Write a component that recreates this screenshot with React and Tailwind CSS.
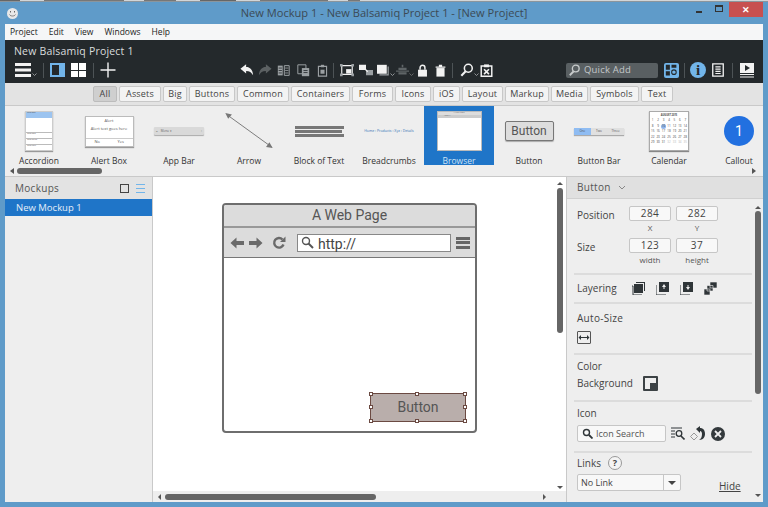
import React from "react";

const filters = [
  ["All", "w-[24px]"], ["Assets", "w-[42px]"], ["Big", "w-[24px]"], ["Buttons", "w-[46px]"], ["Common", "w-[52px]"],
  ["Containers", "w-[59px]"], ["Forms", "w-[41px]"], ["Icons", "w-[36px]"], ["iOS", "w-[27px]"], ["Layout", "w-[41px]"],
  ["Markup", "w-[44px]"], ["Media", "w-[37px]"], ["Symbols", "w-[49px]"], ["Text", "w-[32px]"],
];

function Glyph({ size = 16, children, className = "" }) {
  return (
    <svg width={size} height={size} viewBox="0 0 16 16" className={`shrink-0 ${className}`}>
      {children}
    </svg>
  );
}

function Divider() {
  return <div className="w-px h-[15px] bg-[#4d5356] shrink-0" />;
}

function Caret({ color = "#a8acae" }) {
  return (
    <svg width="5" height="14" viewBox="0 0 5 14" className="shrink-0">
      <path d="M0.500 10.500l2 2 2-2" fill="none" stroke={color} strokeWidth="0.800" />
    </svg>
  );
}

function Toolbar() {
  const w = "#f2f2f2";
  const g = "#9ba0a3";
  return (
    <div className="h-[26px] flex items-center pl-[10px]">
      <Glyph size={16}><path d="M0 1h16v3H0zM0 6.500h16v3H0zM0 12h16v3H0z" fill={w} /></Glyph>
      <div className="ml-[1px] mr-[6px]"><Caret /></div>
      <Divider />
      <div className="ml-[6px] w-[15px] h-[14px] bg-[#72b5ea] flex p-[2px] pr-[3px] shrink-0"><div className="w-[7px] bg-[#24292c]" /></div>
      <div className="ml-[6px] w-[15px] h-[14px] grid grid-cols-2 gap-[1px] shrink-0">
        <div className="bg-white" /><div className="bg-white" /><div className="bg-white" /><div className="bg-white" />
      </div>
      <div className="w-[7px] shrink-0" />
      <Divider />
      <Glyph size={16} className="ml-[6px]"><path d="M0.500 8h15M8 0.500v15" stroke={w} strokeWidth="1.400" /></Glyph>
      <Glyph size={14} className="ml-[124px]"><path d="M0.500 6.500L7 1.500V4.500c4.500 0 7.500 3 8 9.500C13 10.500 11 9 7 9v3z" fill={w} /></Glyph>
      <Glyph size={14} className="ml-[4px]"><path d="M15.500 6.500L9 1.500V4.500C4.500 4.500 1.500 7.500 1 14 3 10.500 5 9 9 9v3z" fill="#5c6163" /></Glyph>
      <Glyph size={13} className="ml-[5px]"><path d="M1 2h6v12H1z" fill={g} /><path d="M9 2h6v12H9z" fill="none" stroke={g} strokeWidth="1.200" /><path d="M10 5h4M10 8h4M10 11h4" stroke={g} /><path d="M2 5h4M2 8h4M2 11h4" stroke="#24292c" /></Glyph>
      <Glyph size={13} className="ml-[7px]"><path d="M1 1h10v11H1z" fill="none" stroke={g} strokeWidth="1.200" /><path d="M6 5h9v10H6z" fill={g} /><path d="M8 8h5M8 10.500h5" stroke="#24292c" /></Glyph>
      <Glyph size={13} className="ml-[6px]"><path d="M3 3h10v12H3z" fill="none" stroke={g} strokeWidth="1.400" /><path d="M6 1h4v3H6z" fill={g} /><path d="M5.500 7h5v5h-5z" fill={g} /></Glyph>
      <div className="ml-[4px]"><Divider /></div>
      <Glyph size={14} className="ml-[6px]"><path d="M2 3h12v10H2z" fill="none" stroke={w} strokeWidth="1.300" /><path d="M7 7h6v5H7z" fill={w} /><path d="M0 1h3v3H0zM13 1h3v3h-3zM0 12h3v3H0zM13 12h3v3h-3z" fill={g} /></Glyph>
      <Glyph size={14} className="ml-[5px]"><path d="M0 2h8v6H0z" fill={w} /><path d="M8 8h8v6H8z" fill={g} /><path d="M6 6l4 4" stroke={w} strokeWidth="1.500" /></Glyph>
      <Glyph size={13} className="ml-[4px]"><path d="M0 1h12v11H0z" fill={w} /><path d="M13 3h1.500v11H3v-1.500h10z" fill={g} /></Glyph>
      <Caret />
      <Glyph size={13} className="ml-[1px]"><path d="M7 1h2v3H7zM3 4.500h10v3H3zM0 8h16v1.500H0zM3 10h10v3H3z" fill="#5f6567" /></Glyph>
      <Caret color="#777" />
      <Glyph size={13} className="ml-[2px]"><path d="M2.500 7h11v8.500h-11z" fill={w} /><path d="M5 7V4.500a3 3 0 0 1 6 0V7" fill="none" stroke={w} strokeWidth="1.800" /></Glyph>
      <Glyph size={13} className="ml-[5px]"><path d="M3 5h10v10.500H3z" fill={w} /><path d="M2 3h12v1.500H2zM6 1h4v2H6z" fill={w} /></Glyph>
      <div className="ml-[5px]"><Divider /></div>
      <Glyph size={14} className="ml-[7px]"><circle cx="9.500" cy="6" r="4.500" fill="none" stroke={w} strokeWidth="1.800" /><path d="M6.500 9.500L1.500 14.500" stroke={w} strokeWidth="2.400" /></Glyph>
      <Caret />
      <Glyph size={13} className="ml-[1px]"><path d="M1.500 2.500h13v12.500h-13z" fill="none" stroke={w} strokeWidth="1.800" /><path d="M5 0.500h6V4H5z" fill={w} /><path d="M5 6.500l6 6M11 6.500l-6 6" stroke={w} strokeWidth="2" /></Glyph>
      <div className="ml-[73px] w-[92px] h-[15px] shrink-0 bg-[#595f62] rounded-[2px] flex items-center pl-[3px] text-[9.500px] text-[#c4c7c9] tracking-[0.2px]">
        <Glyph size={12}><circle cx="9" cy="6" r="4.500" fill="none" stroke="#c8cbcc" strokeWidth="1.800" /><path d="M6 10l-5 5" stroke="#c8cbcc" strokeWidth="2.400" /></Glyph>
        <span className="ml-[3px] leading-none">Quick Add</span>
      </div>
      <div className="ml-[6px] w-[15px] h-[15px] shrink-0 bg-[#72b5ea] rounded-[2px] flex items-center justify-center">
        <Glyph size={13}><path d="M1 1h5v6H1zM8 1h6v3.500H8zM1 9h5v5H1z" fill="#24292c" /><circle cx="11" cy="10" r="2.800" fill="none" stroke="#24292c" strokeWidth="1.300" /></Glyph>
      </div>
      <div className="ml-[5px]"><Divider /></div>
      <div className="ml-[5px] w-[16px] h-[16px] shrink-0 rounded-full bg-[#72b5ea] flex items-center justify-center font-['Liberation_Serif',serif] font-bold text-[15px] leading-none text-[#24292c]">i</div>
      <Glyph size={14} className="ml-[5px]"><path d="M2 1h12v14H2z" fill="none" stroke={w} strokeWidth="1.500" /><path d="M5 4.500h6M5 7h6M5 9.500h6M5 12h6" stroke={w} strokeWidth="1.300" /></Glyph>
      <div className="ml-[7px]"><Divider /></div>
      <Glyph size={16} className="ml-[6px]"><path d="M1 1h14v10H1z" fill={w} /><path d="M6 3l5 3-5 3z" fill="#24292c" /><path d="M1 12.500h14M1 15h14" stroke={w} strokeWidth="1.200" /></Glyph>
    </div>
  );
}

function FilterBar() {
  return (
    <div className="h-[23px] bg-[#e3e3e3] border-b border-[#c9c9c9] flex items-center pl-[88px] gap-[2px] text-[9px] text-[#444]">
      {filters.map(([name, width], i) => (
        <div
          key={name}
          className={`h-[16px] shrink-0 flex items-center justify-center border rounded-[2px] tracking-[0.2px] ${width} ${i === 0 ? "bg-[#cfcfcf] border-[#bcbcbc]" : "bg-[#f3f3f3] border-[#c8c8c8]"}`}
        >
          {name}
        </div>
      ))}
    </div>
  );
}

function AccordionThumb() {
  return (
    <div className="w-[28px] h-[40px] bg-white border border-[#ccc] shadow-[0_1px_1px_#999] flex flex-col text-[2px] leading-none text-[#555]">
      <div className="h-[6px] bg-[#9cc4f0] px-[1px]">Item One</div>
      <div className="flex-1" />
      <div className="h-[6px] border-t border-[#bbb] px-[1px]">Item Two</div>
      <div className="h-[6px] border-t border-[#bbb] px-[1px]">Item Three</div>
      <div className="h-[6px] border-t border-[#bbb] px-[1px]">Item Four</div>
    </div>
  );
}

function AlertThumb() {
  return (
    <div className="w-[49px] h-[31px] bg-white border border-[#bbb] shadow-[0_1px_1px_#999] flex flex-col items-center text-[4px] leading-none text-[#555]">
      <div className="mt-[2px]">Alert</div>
      <div className="mt-[4px] flex-1">Alert text goes here</div>
      <div className="w-full h-[8px] border-t border-[#ccc] grid grid-cols-2 text-center items-center">
        <span>No</span><span>Yes</span>
      </div>
    </div>
  );
}

function AppBarThumb() {
  return (
    <div className="w-[50px] h-[8px] bg-[#d9d9d9] rounded-[1px] shadow-[0_1px_1px_#aaa] flex items-center px-[2px] text-[3px] text-[#666]">
      <span>≡</span><span className="ml-[3px]">Menu ▾</span><span className="ml-auto">›</span>
    </div>
  );
}

function ArrowThumb() {
  return (
    <svg width="52" height="36" viewBox="0 0 52 38">
      <path d="M3 2L50 36" stroke="#777" strokeWidth="1" />
      <path d="M1 0l7 1.500-4 4.500zM51 37l-7-1 3.500-5z" fill="#777" />
    </svg>
  );
}

function TextBlockThumb() {
  return (
    <div className="w-[49px] flex flex-col gap-[1px]">
      <div className="h-[3px] bg-[#777]" />
      <div className="h-[3px] bg-[#777] w-[47px]" />
      <div className="h-[3px] bg-[#777]" />
    </div>
  );
}

function BreadThumb() {
  return <div className="text-[3.500px] leading-none text-[#2f6fb5] whitespace-nowrap">Home › Products › Xyz › Details</div>;
}

function BrowserThumb() {
  return (
    <div className="w-[45px] h-[40px] bg-white border border-[#bbb] flex flex-col">
      <div className="h-[3px] bg-[#ddd] text-[2px] leading-none text-center text-[#666]">A Web Page</div>
      <div className="h-[3px] bg-[#ccc] text-[2px] leading-none text-[#666] pl-[2px]">← → http://</div>
    </div>
  );
}

function ButtonThumb() {
  return (
    <div className="w-[49px] h-[20px] bg-[#ddd] border border-[#777] rounded-[2px] shadow-[0_1px_1px_#aaa] flex items-center justify-center font-['Roboto',sans-serif] text-[12px] text-[#555]">
      Button
    </div>
  );
}

function ButtonBarThumb() {
  return (
    <div className="w-[50px] h-[7px] grid grid-cols-3 shadow-[0_1px_1px_#aaa] text-[3px] leading-[7px] text-center text-[#555]">
      <span className="bg-[#8fbcf2]">One</span><span className="bg-[#e0e0e0]">Two</span><span className="bg-[#e0e0e0]">Three</span>
    </div>
  );
}

function CalendarThumb() {
  const days = Array.from({ length: 35 }, (_, i) => i + 1);
  return (
    <div className="w-[40px] h-[40px] bg-white border border-[#aaa] shadow-[0_1px_1px_#888] flex flex-col items-center text-[#444] overflow-hidden">
      <div className="text-[2.500px] leading-[6px] font-bold">AUGUST 2015</div>
      <div className="w-full h-[28px] grid grid-cols-7 text-[3px] leading-[5px] text-center">
        {days.map((d) => (
          <span key={d} className={d === 10 ? "bg-[#8fb4ea] rounded-full" : d > 31 ? "text-[#bbb]" : ""}>{d}</span>
        ))}
      </div>
    </div>
  );
}

function CalloutThumb() {
  return (
    <div className="w-[30px] h-[30px] rounded-full bg-[#2270e0] text-white flex items-center justify-center font-['Roboto',sans-serif] text-[14px]">1</div>
  );
}

const library = [
  ["Accordion", <AccordionThumb key="a" />],
  ["Alert Box", <AlertThumb key="b" />],
  ["App Bar", <AppBarThumb key="c" />],
  ["Arrow", <ArrowThumb key="d" />],
  ["Block of Text", <TextBlockThumb key="e" />],
  ["Breadcrumbs", <BreadThumb key="f" />],
  ["Browser", <BrowserThumb key="g" />],
  ["Button", <ButtonThumb key="h" />],
  ["Button Bar", <ButtonBarThumb key="i" />],
  ["Calendar", <CalendarThumb key="j" />],
  ["Callout", <CalloutThumb key="k" />],
];

function Library() {
  return (
    <div className="h-[71px] bg-[#eeeeee] border-b border-[#c9c9c9] flex flex-col relative overflow-hidden">
      <div className="flex h-[59px] ml-[-1px]">
        {library.map(([name, thumb]) => {
          const on = name === "Browser";
          return (
            <div key={name} className={`w-[70px] shrink-0 flex flex-col items-center ${on ? "bg-[#1f75c8] text-[#cfe3f5]" : "text-[#333]"}`}>
              <div className="h-[50px] w-full shrink-0 flex items-center justify-center overflow-hidden">{thumb}</div>
              <div className="text-[8.500px] leading-[13px] whitespace-nowrap mt-[-2px]">{name}</div>
            </div>
          );
        })}
      </div>
      <div className="h-[11px] flex items-center pl-[5px]">
        <span className="w-0 h-0 border-y-[3px] border-y-transparent border-r-[4px] border-r-[#555]" />
        <div className="ml-[3px] w-[85px] h-[6px] rounded-full bg-[#666]" />
        <span className="ml-auto mr-[7px] w-0 h-0 border-y-[3px] border-y-transparent border-l-[4px] border-l-[#555]" />
      </div>
    </div>
  );
}

function MockupsPanel() {
  return (
    <div className="w-[148px] shrink-0 bg-[#eeeeee] border-r border-[#c9c9c9] flex flex-col">
      <div className="h-[22px] bg-[#e3e3e3] flex items-center pl-[10px] text-[10px] text-[#555] tracking-[0.3px]">
        <span>Mockups</span>
        <div className="ml-[61px] w-[9px] h-[9px] border border-[#444]" />
        <div className="ml-[7px] w-[9px] h-[9px] flex flex-col justify-between">
          <div className="h-px bg-[#72b5ea]" /><div className="h-px bg-[#72b5ea]" /><div className="h-px bg-[#72b5ea]" />
        </div>
      </div>
      <div className="h-[17px] bg-[#1f75c8] text-[#e4eef8] text-[9.500px] leading-[17px] pl-[11px]">New Mockup 1</div>
    </div>
  );
}

function BrowserMock() {
  return (
    <div className="absolute left-[69px] top-[26px] w-[255px] h-[230px] bg-white border-2 border-[#6e6e6e] rounded-[4px] flex flex-col overflow-hidden">
      <div className="h-[23px] bg-[#dcdcdc] border-b-2 border-[#999] flex items-center justify-center font-['Roboto',sans-serif] text-[14px] text-[#555]">A Web Page</div>
      <div className="h-[30px] bg-[#dcdcdc] border-b border-[#777] flex items-center pl-[6px]">
        <svg width="14" height="12" viewBox="0 0 14 12" className="shrink-0"><path d="M0.500 6l6-5.500V4H14v4H6.500v3.500z" fill="#6a6a6a" /></svg>
        <svg width="14" height="12" viewBox="0 0 14 12" className="ml-[5px] shrink-0"><path d="M13.500 6l-6-5.500V4H0v4h7.500v3.500z" fill="#6a6a6a" /></svg>
        <svg width="14" height="14" viewBox="0 0 14 14" className="ml-[9px] shrink-0"><path d="M11.500 8.500A4.800 4.800 0 1 1 10.500 3.500" fill="none" stroke="#6a6a6a" strokeWidth="2.400" /><path d="M8 6h5.500V0.500z" fill="#6a6a6a" /></svg>
        <div className="ml-[11px] w-[154px] h-[18px] shrink-0 bg-white border border-[#888] flex items-center pl-[3px]">
          <svg width="13" height="13" viewBox="0 0 13 13"><circle cx="5" cy="5" r="3.500" fill="none" stroke="#555" strokeWidth="1.400" /><path d="M7.500 7.500L12 12" stroke="#555" strokeWidth="2" /></svg>
          <span className="ml-[4px] font-['Roboto',sans-serif] text-[14px] leading-none text-[#444] mt-[3px]">http://</span>
        </div>
        <div className="ml-[5px] w-[14px] h-[12px] shrink-0 flex flex-col justify-between">
          <div className="h-[3px] bg-[#666]" /><div className="h-[3px] bg-[#666]" /><div className="h-[3px] bg-[#666]" />
        </div>
      </div>
    </div>
  );
}

function Handle({ className }) {
  return <div className={`absolute w-[4px] h-[4px] bg-white border border-[#6b4a42] ${className}`} />;
}

function SelectedButton() {
  return (
    <div className="absolute left-[217px] top-[216px] w-[96px] h-[29px] bg-[#b9aeab] border border-[#6b4a42] flex items-center justify-center font-['Roboto',sans-serif] text-[14px] text-[#555]">
      Button
      <Handle className="-left-[2px] -top-[2px]" />
      <Handle className="left-[44px] -top-[2px]" />
      <Handle className="-right-[2px] -top-[2px]" />
      <Handle className="-left-[2px] top-[11px]" />
      <Handle className="-right-[2px] top-[11px]" />
      <Handle className="-left-[2px] -bottom-[2px]" />
      <Handle className="left-[44px] -bottom-[2px]" />
      <Handle className="-right-[2px] -bottom-[2px]" />
    </div>
  );
}

function Canvas() {
  return (
    <div className="flex-1 flex flex-col min-w-0">
      <div className="flex-1 flex min-h-0">
        <div className="flex-1 bg-white relative overflow-hidden">
          <BrowserMock />
          <SelectedButton />
        </div>
        <div className="w-[13px] bg-white flex flex-col items-center pt-[5px]">
          <span className="w-0 h-0 border-x-[3px] border-x-transparent border-b-[3px] border-b-[#555]" />
          <div className="mt-[3px] w-[6px] h-[145px] rounded-full bg-[#666]" />
          <span className="mt-auto mb-[2px] w-0 h-0 border-x-[3px] border-x-transparent border-t-[3px] border-t-[#555]" />
        </div>
      </div>
      <div className="h-[11px] bg-[#eeeeee] flex items-center pl-[5px]">
        <span className="w-0 h-0 border-y-[3px] border-y-transparent border-r-[3px] border-r-[#555]" />
        <div className="ml-[4px] w-[211px] h-[6px] rounded-full bg-[#666]" />
        <span className="ml-auto mr-[20px] w-0 h-0 border-y-[3px] border-y-transparent border-l-[3px] border-l-[#555]" />
      </div>
    </div>
  );
}

function NumberField({ value, label }) {
  return (
    <div className="flex flex-col items-center w-[42px]">
      <div className="w-full h-[15px] bg-[#f8f8f8] border border-[#c6c6c6] rounded-[2px] text-[10px] leading-[13px] text-center text-[#444] tracking-[0.5px]">{value}</div>
      <div className="text-[8px] leading-[14px] text-[#555]">{label}</div>
    </div>
  );
}

function Sep() {
  return <div className="h-[2px] shrink-0 bg-[#dcdcdc]" />;
}

function Inspector() {
  const d = "#2f3538";
  return (
    <div className="w-[197px] shrink-0 bg-[#eeeeee] border-l border-[#c9c9c9] flex flex-col text-[10px] text-[#444]">
      <div className="h-[22px] bg-[#e0e0e0] border-b border-[#d0d0d0] flex items-center pl-[10px] text-[10px] text-[#555] tracking-[0.3px]">
        Button<svg width="8" height="5" viewBox="0 0 8 5" className="ml-[7px]"><path d="M1 1l3 3 3-3" fill="none" stroke="#888" /></svg>
      </div>
      <div className="flex-1 flex min-h-0">
        <div className="flex-1 pl-[7px] flex flex-col min-w-0">
          <div className="pt-[7px] px-[3px] h-[74px] shrink-0">
            <div className="flex h-[32px]">
              <span className="w-[52px] leading-[19px]">Position</span>
              <div className="flex gap-[5px]"><NumberField value="284" label="X" /><NumberField value="282" label="Y" /></div>
            </div>
            <div className="flex">
              <span className="w-[52px] leading-[19px]">Size</span>
              <div className="flex gap-[5px]"><NumberField value="123" label="width" /><NumberField value="37" label="height" /></div>
            </div>
          </div>
          <Sep />
          <div className="h-[27px] shrink-0 flex items-center pl-[3px]">
            <span className="w-[55px]">Layering</span>
            <svg width="13" height="13" viewBox="0 0 13 13"><path d="M4 0h9v9h-1V1H4z" fill={d} /><path d="M2 2h9v9H2z" fill={d} /><path d="M0 4h1v9h9" fill="none" stroke={d} /></svg>
            <svg width="13" height="13" viewBox="0 0 13 13" className="ml-[11px]"><path d="M3 0h10v10H3z" fill={d} /><path d="M0 3v10h10" fill="none" stroke={d} /><path d="M8 2l2 3H6z" fill="#eee" /><path d="M7.500 4h1v3h-1z" fill="#eee" /></svg>
            <svg width="13" height="13" viewBox="0 0 13 13" className="ml-[11px]"><path d="M3 0h10v10H3z" fill={d} /><path d="M0 3v10h10" fill="none" stroke={d} /><path d="M8 8l2-3H6z" fill="#eee" /><path d="M7.500 3h1v3h-1z" fill="#eee" /></svg>
            <svg width="13" height="13" viewBox="0 0 13 13" className="ml-[11px]"><path d="M6 0h7v6H6zM3 3.500h6V9H3zM0 7h6v6H0z" fill={d} stroke="#eee" strokeWidth="0.600" /></svg>
          </div>
          <Sep />
          <div className="h-[49px] shrink-0 pl-[3px] pt-[6px]">
            <div className="leading-[16px] tracking-[0.3px]">Auto-Size</div>
            <div className="mt-[5px] w-[14px] h-[13px] border border-[#555] rounded-[1px] flex items-center justify-center">
              <svg width="12" height="7" viewBox="0 0 12 7"><path d="M1 3.500h10" stroke={d} /><path d="M0.500 3.500L3 1v5zM11.500 3.500L9 1v5z" fill={d} /></svg>
            </div>
          </div>
          <Sep />
          <div className="h-[45px] shrink-0 pl-[3px] pt-[3px]">
            <div className="leading-[16px]">Color</div>
            <div className="flex items-center mt-[2px]">
              <span className="w-[66px]">Background</span>
              <div className="relative w-[15px] h-[15px] border-2 border-[#3c4245] bg-[#eeeeee] rounded-[1px]">
                <span className="absolute right-0 bottom-0 w-[6px] h-[6px] bg-[#3c4245]" />
              </div>
            </div>
          </div>
          <Sep />
          <div className="h-[49px] shrink-0 pl-[3px] pt-[3px]">
            <div className="leading-[16px]">Icon</div>
            <div className="flex items-center mt-[4px]">
              <div className="w-[89px] h-[17px] bg-[#f8f8f8] border border-[#c6c6c6] rounded-[2px] flex items-center pl-[4px] text-[9px] text-[#555]">
                <svg width="11" height="11" viewBox="0 0 11 11"><circle cx="4.500" cy="4.500" r="3" fill="none" stroke={d} strokeWidth="1.400" /><path d="M7 7l3.500 3.500" stroke={d} strokeWidth="1.800" /></svg>
                <span className="ml-[3px]">Icon Search</span>
              </div>
              <svg width="14" height="13" viewBox="0 0 14 13" className="ml-[5px]"><path d="M0 1h11M0 4h4M0 7h4M0 10h4" stroke={d} strokeWidth="1.200" /><circle cx="8" cy="6.500" r="2.800" fill="none" stroke={d} strokeWidth="1.300" /><path d="M10 9l3.500 3.500" stroke={d} strokeWidth="1.600" /></svg>
              <svg width="16" height="15" viewBox="0 0 16 15" className="ml-[5px]"><path d="M4 7L7.500 10.500 4 14 0.500 10.500z" fill="none" stroke="#999" /><path d="M6 3l4-3v2c3 0 5 2 5 6 0 3-2 6-6 6 2-1 3-3 3-6 0-2-1-3-2-3v2z" fill={d} /></svg>
              <div className="ml-[5px] w-[14px] h-[14px] rounded-full bg-[#33393c] flex items-center justify-center">
                <svg width="8" height="8" viewBox="0 0 8 8"><path d="M1 1l6 6M7 1L1 7" stroke="#eee" strokeWidth="1.800" /></svg>
              </div>
            </div>
          </div>
          <Sep />
          <div className="pl-[3px] pt-[2px]">
            <div className="flex items-center h-[16px]">
              <span>Links</span>
              <span className="ml-[7px] w-[14px] h-[14px] rounded-full border border-[#999] bg-[#f4f4f4] flex items-center justify-center text-[9px] font-bold text-[#444]">?</span>
            </div>
            <div className="flex items-end mt-[3px]">
              <div className="w-[104px] h-[17px] bg-[#f8f8f8] border border-[#c6c6c6] rounded-[2px] flex items-center pl-[3px] text-[9px] text-[#444]">
                <span className="flex-1">No Link</span>
                <span className="w-[17px] h-full border-l border-[#c6c6c6] flex items-center justify-center">
                  <span className="w-0 h-0 border-x-[4px] border-x-transparent border-t-[4px] border-t-[#444]" />
                </span>
              </div>
              <span className="ml-[38px] underline text-[#444] leading-none">Hide</span>
            </div>
          </div>
        </div>
        <div className="w-[11px] flex flex-col items-center pt-[7px]">
          <span className="w-0 h-0 border-x-[3px] border-x-transparent border-b-[3px] border-b-[#555]" />
          <div className="mt-[2px] w-[6px] h-[183px] rounded-full bg-[#666]" />
          <span className="mt-auto mb-[5px] w-0 h-0 border-x-[3px] border-x-transparent border-t-[3px] border-t-[#555]" />
        </div>
      </div>
    </div>
  );
}

export default function App() {
  return (
    <div className="w-[768px] h-[507px] bg-[#5f9bc9] flex flex-col overflow-hidden font-['Open_Sans',sans-serif]">
      <div className="h-[2px] bg-[#d2d5d7] flex border-b border-[#8b959c]">
        <div className="h-px w-[20px] bg-[#666]" />
        <div className="h-px w-[80px] ml-[24px] bg-[#777]" />
        <div className="h-px w-[32px] ml-[20px] bg-[#777]" />
        <div className="h-px w-[36px] ml-[24px] bg-[#666]" />
        <div className="h-px w-[68px] ml-[24px] bg-[#777]" />
        <div className="h-px w-[12px] ml-[20px] bg-[#777]" />
      </div>
      <div className="h-[22px] flex items-center relative">
        <svg width="11" height="11" viewBox="0 0 11 11" className="ml-[7px]">
          <circle cx="5.500" cy="5.500" r="5.500" fill="#e8e8e8" />
          <path d="M3.500 3v1.500M7.500 3v1.500" stroke="#666" />
          <path d="M2.500 6.500c1 2 5 2 6 0" fill="none" stroke="#666" strokeWidth="0.800" />
        </svg>
        <div className="absolute left-0 right-0 text-center text-[11.100px] leading-none text-[#3c4a55]">New Mockup 1 - New Balsamiq Project 1 - [New Project]</div>
        <div className="ml-auto flex items-start self-start relative">
          <div className="w-[6px] h-[2px] bg-[#333] mt-[9px] mr-[13px]" />
          <div className="w-[8px] h-[7px] border border-[#333] border-t-2 mt-[3px] mr-[6px]" />
          <div className="w-[34px] h-[15px] bg-[#c75050] flex items-center justify-center text-white text-[9px] font-bold leading-none mr-[5px]">✕</div>
        </div>
      </div>
      <div className="flex-1 flex flex-col ml-[5px] mr-[5px] mb-[5px] min-h-0">
        <div className="h-[16px] bg-[#f5f6f7] flex items-center pl-[5px] gap-[11px] text-[8.500px] text-[#222]">
          <span>Project</span><span>Edit</span><span>View</span><span>Windows</span><span>Help</span>
        </div>
        <div className="h-[43px] bg-[#24292c] flex flex-col">
          <div className="h-[17px] shrink-0 pl-[9px] pt-[3px] text-[10.500px] leading-[16px] text-[#d9dcdd] tracking-[0.2px]">New Balsamiq Project 1</div>
          <Toolbar />
        </div>
        <FilterBar />
        <Library />
        <div className="flex-1 flex min-h-0">
          <MockupsPanel />
          <Canvas />
          <Inspector />
        </div>
      </div>
    </div>
  );
}
